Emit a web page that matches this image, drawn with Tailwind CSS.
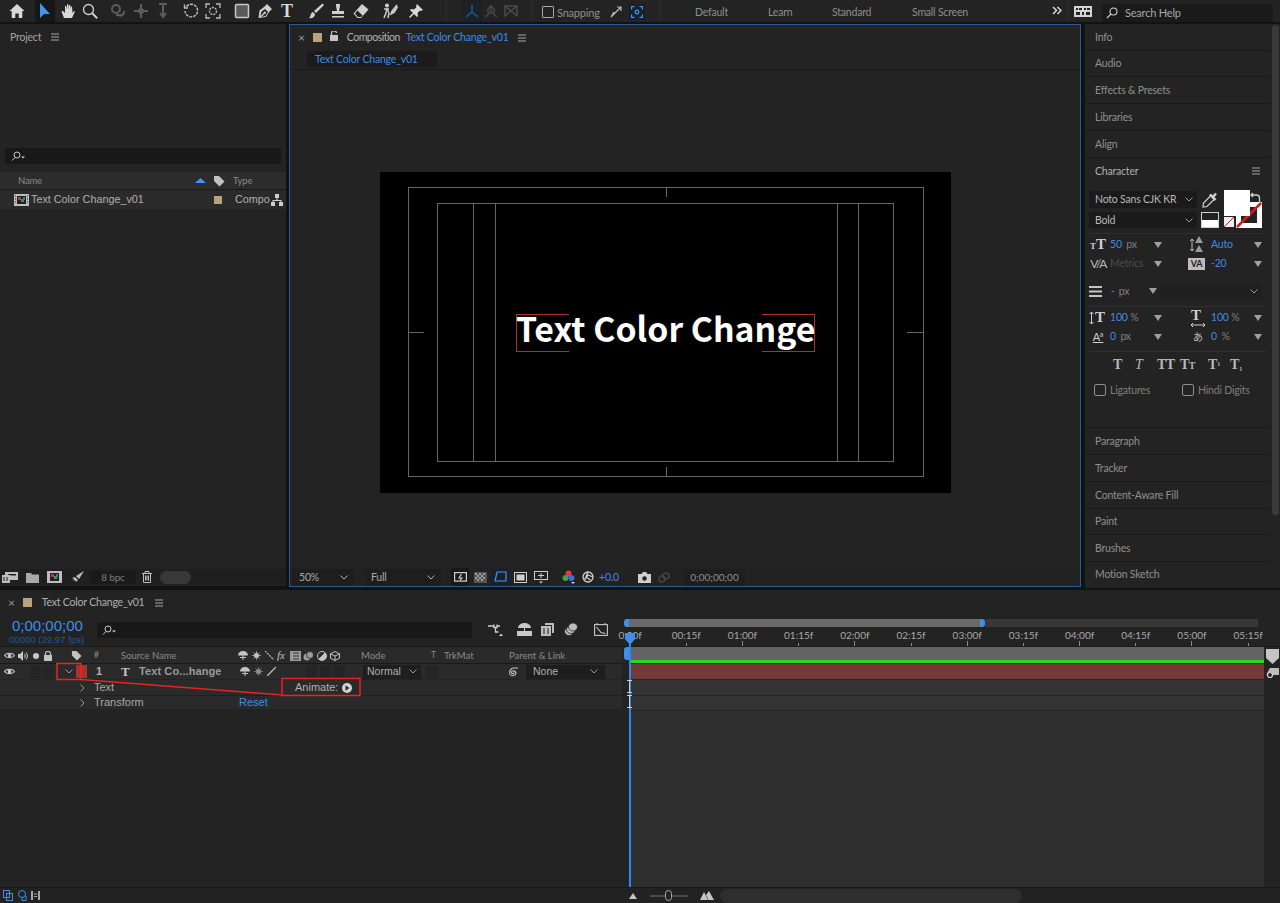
<!DOCTYPE html>
<html>
<head>
<meta charset="utf-8">
<title>Text Color Change_v01</title>
<script src="https://cdn.jsdelivr.net/npm/@tailwindcss/browser@4"></script>
</head>
<body class="relative w-[1280px] h-[903px] overflow-hidden bg-[#121212] text-[10.500px] tracking-[-0.2px] leading-none text-[#a3a3a3] font-[Lato,sans-serif]">

<!-- toolbar -->
<header class="flex items-center h-[22px] bg-[#232323] pl-[9px]">
  <svg class="w-4 h-4" viewBox="0 0 16 16" fill="#d8d8d8"><path d="M8 1 0.5 8h2.200v7h3.600v-4.500h3.400V15h3.600V8h2.200z"/></svg>
  <div class="flex items-center justify-center w-[20px] h-[22px] ml-[10px] bg-[#171717]"><svg class="w-4 h-4" viewBox="0 0 16 16" fill="#3f95f2"><path d="M3 0v15l4-4 6 0z"/></svg></div>
  <svg class="w-4 h-4 ml-[5px]" viewBox="0 0 16 16" fill="#d8d8d8"><path d="M4 15 1.500 8.500l1.200-.8L5 10V3l1.200-.3.8 4.300V1.500L8.300 1.300 9 6.500V2l1.300.2.500 4.600V3.500l1.300.3.400 6.200 1.500-2 1 .5L12 15z"/></svg>
  <svg class="w-4 h-4 ml-[6px]" viewBox="0 0 16 16" fill="none" stroke="#cfcfcf" stroke-width="1.300"><circle cx="6.500" cy="6.500" r="5"/><path d="m10.200 10.200 5 5" stroke-width="2"/></svg>
  <svg class="w-4 h-4 ml-[12px]" viewBox="0 0 16 16" fill="none" stroke="#5c5c5c" stroke-width="2"><circle cx="6" cy="6" r="4"/><path d="M8 12a4 4 0 0 0 6-4"/><path d="M6 12h6"/></svg>
  <svg class="w-4 h-4 ml-[7px]" viewBox="0 0 16 16" fill="none" stroke="#5c5c5c" stroke-width="2"><path d="M8 1v14M1 8h14"/><circle cx="8" cy="8" r="2" fill="#5c5c5c"/></svg>
  <svg class="w-4 h-4 ml-[6px]" viewBox="0 0 16 16" fill="none" stroke="#5c5c5c" stroke-width="2"><path d="M8 1v12M5 10l3 4 3-4M4 1h8"/></svg>
  <svg class="w-4 h-4 ml-[12px]" viewBox="0 0 16 16" fill="none" stroke="#bdbdbd" stroke-width="1.400"><path d="M3.500 3.500A6.300 6.300 0 1 1 2 8" stroke-dasharray="3 1"/><path d="M1.500 1.500v3.500H5"/></svg>
  <svg class="w-4 h-4 ml-[6px]" viewBox="0 0 16 16" fill="none" stroke="#bdbdbd" stroke-width="1.300"><path d="M1 5V1h4M11 1h4v4M15 11v4h-4M5 15H1v-4"/><circle cx="8" cy="8" r="3.500" stroke-dasharray="2 1"/></svg>
  <svg class="w-4 h-4 ml-[13px]" viewBox="0 0 16 16" fill="#5a5a5a" stroke="#c9c9c9" stroke-width="1.500"><rect x="1.500" y="1.500" width="13" height="13" rx="1"/></svg>
  <svg class="w-4 h-4 ml-[7px]" viewBox="0 0 16 16" fill="#d0d0d0"><path d="M10 1 15 6 12 9 9 14 1.500 15 2.500 7.500 7 4zM4.500 8.500l-1 4.500 3-3a1.200 1.200 0 1 1 1 1l-3 3 4-1 2.500-4-3-3z"/></svg>
  <span class="w-4 ml-[6px] text-center text-[18px] font-bold text-[#d8d8d8] font-['Liberation_Serif',serif]">T</span>
  <svg class="w-4 h-4 ml-[13px]" viewBox="0 0 16 16" fill="#d0d0d0"><path d="M14.500 0.500 16 2 8 10 6 8zM5 9l2 2c0 3-3 5-6 4 2-1 1-5 4-6z"/></svg>
  <svg class="w-4 h-4 ml-[6px]" viewBox="0 0 16 16" fill="#d0d0d0"><path d="M6 1h4v2L9 8h5v3H2V8h5L6 3zM2 13h12v1.500H2z"/></svg>
  <svg class="w-4 h-4 ml-[7px]" viewBox="0 0 16 16" fill="#d0d0d0"><path d="M9 1 15.500 6.500 8 15H4.500L0.500 10.500z"/><path d="M4.500 7.500 9.500 12.500 8 14H5L2 10.500z" fill="#232323"/></svg>
  <svg class="w-4 h-4 ml-[13px]" viewBox="0 0 16 16" fill="none" stroke="#c9c9c9" stroke-width="1.500"><circle cx="5" cy="2.500" r="1.300" fill="#c9c9c9"/><path d="M5 5 4 10l-2 5M5 6l2 4-1 5M2 6h5"/><path d="m15 2-5 6-1 3 3-1.500L15.500 4" fill="#c9c9c9"/></svg>
  <svg class="w-4 h-4 ml-[10px]" viewBox="0 0 16 16" fill="#d8d8d8"><path d="m9 1 6 6-2 1-1-.5L9.500 10l.5 3-1 1-3-3-4 4-1-1 4-4-3-3 1-1 3 .5L8.500 4 8 3z"/></svg>
  <div class="w-[1px] h-[22px] ml-[22px] bg-[#2e2e2e]"></div>
  <div class="flex items-center justify-center w-[20px] h-[22px] ml-[15px] bg-[#1c2126]"><svg class="w-4 h-4" viewBox="0 0 16 16" fill="none" stroke="#1e4a7a" stroke-width="2"><path d="M8 2v7l-6 5M8 9l6 5"/></svg></div>
  <svg class="w-4 h-4 ml-[1px]" viewBox="0 0 16 16" fill="none" stroke="#4a4a4a" stroke-width="1.500"><path d="M8 2v7l-6 5M8 9l6 5"/><path d="M5 10V6l3-3 3 3v4"/></svg>
  <svg class="w-4 h-4 ml-[4px]" viewBox="0 0 16 16" fill="none" stroke="#4a4a4a" stroke-width="1.500"><path d="M2 3v10l12-10v10zM2 3h12"/></svg>
  <div class="w-[1px] h-[22px] ml-[12px] bg-[#2e2e2e]"></div>
  <div class="w-[12px] h-[12px] ml-[10px] mt-[2px] border-[1.500px] border-[#a8a8a8] rounded-[1px]"></div>
  <span class="ml-[3px] mt-[3px] w-[44px] text-[11px] text-[#8e8e8e]">Snapping</span>
  <svg class="w-3 h-3 ml-[9px] mt-[2px]" viewBox="0 0 12 12" fill="none" stroke="#bdbdbd" stroke-width="1.200"><path d="M1 11 6 6l5-5M7 1h4v4M1 11l3-5"/></svg>
  <div class="flex items-center justify-center w-[16px] h-[16px] ml-[7px] mt-[2px] bg-[#17212d]"><svg class="w-3 h-3" viewBox="0 0 12 12" fill="none" stroke="#3f95f2" stroke-width="1.300"><path d="M0.500 3.500v-3h3M8.500 .5h3v3M11.500 8.500v3h-3M3.500 11.500h-3v-3"/><circle cx="6" cy="6" r="1.800"/></svg></div>
  <div class="w-[1px] h-[22px] ml-[15px] bg-[#2e2e2e]"></div>
  <span class="ml-[34px] mt-[3px] w-[73px] text-[#8e8e8e]">Default</span>
  <span class="mt-[3px] w-[64px] text-[#8e8e8e]">Learn</span>
  <span class="mt-[3px] w-[80px] text-[#8e8e8e]">Standard</span>
  <span class="mt-[3px] w-[140px] text-[#8e8e8e]">Small Screen</span>
  <svg class="w-[10px] h-[10px]" viewBox="0 0 10 10" fill="none" stroke="#d8d8d8" stroke-width="1.500"><path d="m1 1 3.500 3.500L1 8M5.500 1 9 4.500 5.500 8"/></svg>
  <div class="w-[1px] h-[22px] ml-[5px] bg-[#2e2e2e]"></div>
  <div class="flex items-center justify-center w-[18px] h-[11px] ml-[6px] bg-[#d5d5d5]"><svg class="w-[14px] h-[7px]" viewBox="0 0 14 7" fill="#222"><rect x="0" y="0" width="2" height="2"/><rect x="3" y="0" width="3" height="2"/><rect x="8" y="0" width="2" height="2"/><rect x="11" y="0" width="3" height="2"/><rect x="0" y="4" width="4" height="3"/><rect x="6" y="4" width="2" height="3"/><rect x="10" y="4" width="4" height="3"/></svg></div>
  <div class="flex items-center w-[171px] h-[18px] ml-[10px] mt-[3px] bg-[#1a1a1a] rounded-[2px]">
    <svg class="w-3 h-3 ml-[4px]" viewBox="0 0 12 12" fill="none" stroke="#cfcfcf" stroke-width="1.100"><circle cx="7.500" cy="4.500" r="3.500"/><path d="M5 7 1 11"/></svg>
    <span class="ml-[7px] text-[11px] text-[#a8a8a8]">Search Help</span>
  </div>
</header>

<main class="flex h-[564px] mt-[2px]">
  <!-- project panel -->
  <section class="flex flex-col w-[286px] h-[562px] bg-[#232323]">
    <div class="flex items-center h-[26px] pl-[10px]">
      <span class="text-[#a3a3a3]">Project</span>
      <svg class="w-[8px] h-[8px] ml-[10px]" viewBox="0 0 8 8" stroke="#a8a8a8"><path d="M0 1h8M0 4h8M0 7h8"/></svg>
    </div>
    <div class="h-[98px]"></div>
    <div class="flex items-center h-[16px] mx-[5px] bg-[#181818] rounded-[2px] pl-[6px]">
      <svg class="w-[14px] h-[10px]" viewBox="0 0 14 10" fill="none" stroke="#c9c9c9"><circle cx="6" cy="4" r="3"/><path d="M4 6.500 1 9.500"/><path d="M10 5.500h4l-2 2z" fill="#c9c9c9" stroke="none"/></svg>
    </div>
    <div class="flex items-center h-[18px] mt-[8px] bg-[#2c2c2c] text-[9.500px] text-[#8a8a8a] border-b border-[#181818]">
      <span class="ml-[18px] w-[177px]">Name</span>
      <svg class="w-[11px] h-[5px]" viewBox="0 0 11 5" fill="#3f95f2"><path d="M5.500 0 11 5H0z"/></svg>
      <svg class="w-[12px] h-[12px] ml-[7px]" viewBox="0 0 12 12" fill="#c2c2c2"><path d="M1 1h5l5.500 5.500-5 5L1 6z"/></svg>
      <span class="ml-[8px]">Type</span>
    </div>
    <div class="flex items-center h-[19px] bg-[#2a2a2a] font-['Liberation_Sans',sans-serif] tracking-normal text-[10.800px] text-[#b0b0b0]">
      <svg class="w-[15px] h-[12px] ml-[14px]" viewBox="0 0 15 12"><rect width="15" height="12" fill="#bdbdbd"/><rect x="3" y="2" width="9" height="8" fill="#222"/><rect x="4" y="3" width="3" height="3" fill="#c03a3a"/><rect x="7" y="5" width="3" height="3" fill="#3a9a46"/><rect x="9" y="3" width="2" height="3" fill="#3a6fd0"/><path d="M1 2h1M1 5h1M1 8h1M13 2h1M13 5h1M13 8h1" stroke="#222"/></svg>
      <span class="ml-[2px] w-[183px]">Text Color Change_v01</span>
      <div class="w-[8px] h-[8px] bg-[#b9a37e]"></div>
      <span class="ml-[13px] w-[36px] overflow-hidden">Compo</span>
      <svg class="w-[12px] h-[12px]" viewBox="0 0 12 12" fill="#cfcfcf"><rect x="4" y="0" width="4" height="4"/><rect x="0" y="8" width="4" height="4"/><rect x="8" y="8" width="4" height="4"/><path d="M5.500 4h1v2H10.500v2h-1V7h-7v1h-1V6h4z"/></svg>
    </div>
    <div class="flex-1"></div>
    <div class="flex items-center h-[16px] mb-[1px] pl-[2px] bg-[#1f1f1f]">
      <svg class="w-[16px] h-[11px]" viewBox="0 0 16 11" fill="#bdbdbd"><rect x="3" y="0" width="13" height="8"/><rect x="6" y="2" width="8" height="1.500" fill="#222"/><rect x="0" y="3" width="8" height="8"/><path d="M2 5v4M5 5v4" stroke="#222"/></svg>
      <svg class="w-[13px] h-[11px] ml-[8px]" viewBox="0 0 13 11" fill="#a8a8a8"><path d="M0 1h5l1 1.500h7V11H0z"/></svg>
      <svg class="w-[15px] h-[12px] ml-[8px]" viewBox="0 0 15 12"><rect width="15" height="12" fill="#bdbdbd"/><rect x="3" y="2" width="9" height="8" fill="#222"/><rect x="4" y="3" width="3" height="3" fill="#c03a3a"/><rect x="7" y="5" width="3" height="3" fill="#3a9a46"/><rect x="9" y="3" width="2" height="3" fill="#3a6fd0"/></svg>
      <svg class="w-[13px] h-[12px] ml-[9px]" viewBox="0 0 13 12" fill="#bdbdbd"><path d="M13 0 8 8 5 5zM4 6l3 3-2 2-1-2-2 1 1-2-2-1z"/></svg>
      <div class="flex items-center justify-center w-[46px] h-[13px] ml-[6px] bg-[#1a1a1a] text-[10px] text-[#7c7c7c]">8 bpc</div>
      <svg class="w-[10px] h-[12px] ml-[6px]" viewBox="0 0 10 12" fill="none" stroke="#bdbdbd"><path d="M0 2.500h10M3 2.500V.5h4v2M1.500 2.500v9h7v-9M3.500 4.500v5M5 4.500v5M6.500 4.500v5"/></svg>
      <div class="w-[31px] h-[13px] ml-[8px] rounded-full bg-[#383838]"></div>
    </div>
  </section>

  <!-- composition panel -->
  <section class="flex flex-col w-[792px] h-[563px] ml-[3px] bg-[#232323] border border-[#2a5a93]">
    <div class="flex items-center h-[25px] pl-[8px] text-[#b0b0b0]">
      <span class="text-[12px] text-[#9a9a9a]">×</span>
      <div class="w-[9px] h-[9px] ml-[8px] bg-[#b9a37e]"></div>
      <svg class="w-[8px] h-[10px] ml-[8px] mb-[3px]" viewBox="0 0 8 10" fill="#c4c4c4"><path d="M0 4h8v6H0z"/><path d="M1.500 4V2a2.500 2 0 0 1 5 0" fill="none" stroke="#c4c4c4" stroke-width="1.200"/></svg>
      <span class="ml-[9px] tracking-[-0.5px]">Composition</span>
      <span class="ml-[6px] text-[#3f8ae0]">Text Color Change_v01</span>
      <svg class="w-[8px] h-[8px] ml-[9px]" viewBox="0 0 8 8" stroke="#a8a8a8"><path d="M0 1h8M0 4h8M0 7h8"/></svg>
    </div>
    <div class="flex items-center w-[130px] h-[16px] mt-[1px] ml-[17px] pl-[8px] bg-[#1b1b1b] text-[#3f8ae0]">Text Color Change_v01</div>
    <div class="h-[3px] border-b border-[#191919]"></div>
    <div class="flex-1 flex items-start pl-[90px] pt-[102px]">
      <div class="relative w-[571px] h-[321px] bg-black overflow-hidden">
        <div class="absolute left-[28px] top-[15px] w-[516px] h-[290px] border border-[#666]"></div>
        <div class="absolute left-[57px] top-[31px] w-[457px] h-[259px] border border-[#666]"></div>
        <div class="absolute left-[93px] top-[31px] w-[1px] h-[259px] bg-[#666]"></div>
        <div class="absolute left-[115px] top-[31px] w-[1px] h-[259px] bg-[#666]"></div>
        <div class="absolute left-[457px] top-[31px] w-[1px] h-[259px] bg-[#666]"></div>
        <div class="absolute left-[478px] top-[31px] w-[1px] h-[259px] bg-[#666]"></div>
        <div class="absolute left-[286px] top-[15px] w-[1px] h-[10px] bg-[#666]"></div>
        <div class="absolute left-[286px] top-[295px] w-[1px] h-[10px] bg-[#666]"></div>
        <div class="absolute left-[28px] top-[160px] w-[16px] h-[1px] bg-[#666]"></div>
        <div class="absolute left-[527px] top-[160px] w-[16px] h-[1px] bg-[#666]"></div>
        <div class="absolute left-[136px] top-[142px] w-[53px] h-[38px] border-l border-y border-[#a83232]"></div>
        <div class="absolute left-[382px] top-[142px] w-[53px] h-[38px] border-r border-y border-[#a83232]"></div>
        <div class="absolute left-[136px] top-[134px] w-[299px] text-center whitespace-nowrap tracking-normal text-[33.800px] leading-[44px] font-bold text-white font-['Noto_Sans_CJK_KR',sans-serif]">Text Color Change</div>
      </div>
    </div>
    <div class="flex items-center h-[18px] pl-[3px] text-[#a8a8a8] bg-[#222222]">
      <div class="flex items-center justify-between w-[61px] h-[17px] px-[6px] bg-[#1e1e1e]"><span>50%</span><svg class="w-[8px] h-[5px]" viewBox="0 0 8 5" fill="none" stroke="#b5b5b5"><path d="m0.500 0.500 3.500 3.500 3.500-3.500"/></svg></div>
      <div class="flex items-center justify-between w-[76px] h-[17px] ml-[11px] px-[6px] bg-[#1e1e1e]"><span>Full</span><svg class="w-[8px] h-[5px]" viewBox="0 0 8 5" fill="none" stroke="#b5b5b5"><path d="m0.500 0.500 3.500 3.500 3.500-3.500"/></svg></div>
      <div class="flex items-center justify-center w-[18px] h-[18px] ml-[10px] bg-[#1a1a1a]"><svg class="w-[13px] h-[11px]" viewBox="0 0 13 11" fill="none" stroke="#cfcfcf" stroke-width="1.200"><rect x=".6" y=".6" width="11.800" height="8.500"/><path d="M7.500 2 5 6h3L6 8.500"/></svg></div>
      <svg class="w-[13px] h-[11px] ml-[5px]" viewBox="0 0 13 11" fill="#9a9a9a"><rect width="13" height="11" fill="#555"/><path d="M1 1h2v2H1zM5 1h2v2H5zM9 1h2v2H9zM3 3h2v2H3zM7 3h2v2H7zM1 5h2v2H1zM5 5h2v2H5zM9 5h2v2H9zM3 7h2v2H3zM7 7h2v2H7z"/></svg>
      <div class="flex items-center justify-center w-[18px] h-[18px] ml-[4px] bg-[#1a2029]"><svg class="w-[13px] h-[12px]" viewBox="0 0 13 12" fill="none" stroke="#3f95f2" stroke-width="1.200"><path d="M3 1h9v9H1z"/></svg></div>
      <svg class="w-[13px] h-[11px] ml-[5px]" viewBox="0 0 13 11" fill="none" stroke="#cfcfcf"><rect x=".5" y=".5" width="12" height="10"/><rect x="3" y="3" width="7" height="5" fill="#cfcfcf"/></svg>
      <svg class="w-[14px] h-[13px] ml-[7px]" viewBox="0 0 14 13" fill="none" stroke="#cfcfcf"><rect x=".5" y=".5" width="13" height="8"/><path d="M7 2v5M4 4.500h6"/><path d="M5 10.500h4l-2 2z" fill="#cfcfcf" stroke="none"/></svg>
      <svg class="w-[13px] h-[14px] ml-[14px]" viewBox="0 0 13 14"><circle cx="6.500" cy="3.500" r="3" fill="#e03a3a"/><circle cx="3.500" cy="8" r="3" fill="#3aa648"/><circle cx="9.500" cy="8" r="3" fill="#3a6fe0"/><path d="M9 12h4l-2 2z" fill="#cfcfcf"/></svg>
      <svg class="w-[12px] h-[12px] ml-[7px]" viewBox="0 0 12 12" fill="none" stroke="#cfcfcf" stroke-width="1.300"><circle cx="6" cy="6" r="5"/><path d="M6 1 4 6l4.500 3M11 6 6 4 2.500 8.500"/></svg>
      <span class="ml-[5px] w-[19px] text-[#3f8ae0]">+0.0</span>
      <svg class="w-[13px] h-[11px] ml-[20px]" viewBox="0 0 13 11" fill="#cfcfcf"><path d="M0 2h3.500L5 0h3l1.500 2H13v9H0z"/><circle cx="6.500" cy="6.500" r="2.200" fill="#232323"/></svg>
      <svg class="w-[13px] h-[11px] ml-[6px]" viewBox="0 0 13 11" fill="none" stroke="#454545" stroke-width="1.500"><circle cx="5" cy="7" r="3"/><circle cx="9" cy="4" r="3"/></svg>
      <div class="flex items-center justify-center w-[61px] h-[17px] ml-[14px] bg-[#1e1e1e] text-[10px] text-[#8e8e8e] tracking-normal">0;00;00;00</div>
    </div>
  </section>

  <!-- right panels -->
  <aside class="relative flex w-[195px] ml-[4px] h-[564px] bg-[#232323]">
    <div class="flex flex-col w-[186px] pt-[1px] text-[#8f8f8f]">
      <div class="flex items-center h-[26px] pl-[10px] bg-[#232323] border-b border-[#191919]">Info</div>
      <div class="flex items-center h-[26px] pl-[10px] bg-[#232323] border-b border-[#191919]">Audio</div>
      <div class="flex items-center h-[27px] pl-[10px] bg-[#232323] border-b border-[#191919]">Effects &amp; Presets</div>
      <div class="flex items-center h-[27px] pl-[10px] bg-[#232323] border-b border-[#191919]">Libraries</div>
      <div class="flex items-center h-[27px] pl-[10px] bg-[#232323] border-b border-[#191919]">Align</div>

      <!-- character -->
      <div class="flex flex-col h-[270px] bg-[#232323] border-b border-[#191919]">
        <div class="flex items-center justify-between h-[26px] pl-[10px] pr-[11px] text-[#b0b0b0]"><span>Character</span><svg class="w-[8px] h-[8px]" viewBox="0 0 8 8" stroke="#a8a8a8"><path d="M0 1h8M0 4h8M0 7h8"/></svg></div>
        <div class="relative flex flex-col h-[42px] mt-[7px]">
          <div class="flex items-center w-[108px] h-[17px] ml-[4px] bg-[#1a1a1a] text-[#b8b8b8]"><span class="w-[93px] pl-[6px] whitespace-nowrap">Noto Sans CJK KR</span><svg class="w-[8px] h-[5px] ml-[3px]" viewBox="0 0 8 5" fill="none" stroke="#9a9a9a"><path d="m0.500 0.500 3.500 3.500 3.500-3.500"/></svg></div>
          <div class="flex items-center w-[108px] h-[16px] ml-[4px] mt-[4px] bg-[#1a1a1a] text-[#b8b8b8]"><span class="w-[93px] pl-[6px]">Bold</span><svg class="w-[8px] h-[5px] ml-[3px]" viewBox="0 0 8 5" fill="none" stroke="#9a9a9a"><path d="m0.500 0.500 3.500 3.500 3.500-3.500"/></svg></div>
          <svg class="absolute left-[117px] top-[1px] w-[16px] h-[16px]" viewBox="0 0 16 16" fill="none" stroke="#cfcfcf" stroke-width="1.200"><path d="M9 3.500 1.500 11 1 15l4-.5L12.500 7"/><path d="m8 2.500 5.500 5.500M11 5l3-3.500" stroke-width="2.500"/></svg>
          <div class="absolute left-[116px] top-[21px] w-[18px] h-[16px] border border-[#d0d0d0] bg-[linear-gradient(#222_50%,#fff_50%)]"></div>
          <svg class="absolute left-[139px] top-[-1px] w-[38px] h-[38px]" viewBox="0 0 38 38"><rect x="12" y="12" width="26" height="26" fill="#fff"/><rect x="17" y="17" width="16" height="16" fill="#232323"/><path d="M13 37 37 13" stroke="#d41c1c" stroke-width="2.500"/><rect x="0" y="0" width="26" height="26" fill="#fff"/><rect x="0" y="27" width="10" height="10" fill="#eee"/><path d="M0 37 10 27" stroke="#d41c1c"/></svg>
          <svg class="absolute left-[165px] top-[1px] w-[11px] h-[10px]" viewBox="0 0 11 10" fill="none" stroke="#d0d0d0" stroke-width="1.300"><path d="M3 1 1 3l2 2M1 3h5.500a3 3 0 0 1 3 3v4"/></svg>
        </div>
        <div class="h-[1px] mx-[4px] bg-[#2e2e2e]"></div>

        <div class="grid grid-cols-[21px_43px_35px_23px_43px_1fr] items-center h-[19px] mt-[1px] pl-[4px] pr-[13px] text-[#3f8ae0]">
          <span class="pr-[3px] tracking-normal text-center font-bold text-[#cfcfcf] font-['Liberation_Serif',serif]"><span class="text-[9px]">T</span><span class="text-[15px]">T</span></span>
          <span>50 <span class="ml-[2px] text-[#7e7e7e]">px</span></span>
          <svg class="w-[8px] h-[6px] ml-[1px]" viewBox="0 0 8 6" fill="#a0a0a0"><path d="M0 0h8L4 6z"/></svg>
          <svg class="w-[14px] h-[17px] ml-[2px]" viewBox="0 0 14 17" fill="#9a9a9a"><path d="M9 0 5 7h8zM9 9 5 16h8z"/><path d="M2 3v12M0 5l2-2 2 2M0 13l2 2 2-2" fill="none" stroke="#bdbdbd"/></svg>
          <span>Auto</span>
          <svg class="w-[8px] h-[6px] justify-self-end" viewBox="0 0 8 6" fill="#a0a0a0"><path d="M0 0h8L4 6z"/></svg>
        </div>
        <div class="grid grid-cols-[21px_43px_35px_23px_43px_1fr] items-center h-[19px] pl-[4px] pr-[13px] text-[#3f8ae0]">
          <span class="pr-[3px] text-[12px] tracking-[-1.500px] text-center text-[#bdbdbd]">V/A</span>
          <span class="text-[#4c4c4c]">Metrics</span>
          <svg class="w-[8px] h-[6px] ml-[1px]" viewBox="0 0 8 6" fill="#a0a0a0"><path d="M0 0h8L4 6z"/></svg>
          <div class="flex items-center justify-center w-[17px] h-[12px] bg-[#bdbdbd] text-[9px] font-bold text-[#232323]">VA</div>
          <span>-20</span>
          <svg class="w-[8px] h-[6px] justify-self-end" viewBox="0 0 8 6" fill="#a0a0a0"><path d="M0 0h8L4 6z"/></svg>
        </div>
        <div class="flex items-center h-[33px] pt-[3px] ml-[4px] mr-[9px] text-[#7e7e7e]">
          <svg class="w-[13px] h-[11px]" viewBox="0 0 13 11" fill="#c4c4c4"><path d="M0 0h13v2H0zM0 4.500h13v2H0zM0 9h13v2H0z"/></svg>
          <span class="ml-[9px] text-[#3f8ae0]">-</span><span class="ml-[4px]">px</span>
          <svg class="w-[8px] h-[6px] ml-[20px]" viewBox="0 0 8 6" fill="#a0a0a0"><path d="M0 0h8L4 6z"/></svg>
          <div class="flex items-center justify-end flex-1 h-[16px] ml-[4px] pr-[4px] bg-[#1f1f1f]"><svg class="w-[8px] h-[5px]" viewBox="0 0 8 5" fill="none" stroke="#9a9a9a"><path d="m0.500 0.500 3.500 3.500 3.500-3.500"/></svg></div>
        </div>
        <div class="h-[1px] mx-[4px] bg-[#2e2e2e]"></div>

        <div class="grid grid-cols-[21px_43px_35px_23px_43px_1fr] items-center h-[19px] mt-[1px] pl-[4px] pr-[13px] text-[#3f8ae0]">
          <span class="flex items-center pr-[3px] text-[15px] font-bold text-[#cfcfcf] font-['Liberation_Serif',serif]"><svg class="w-[5px] h-[14px] mr-[1px]" viewBox="0 0 5 14" fill="none" stroke="#cfcfcf"><path d="M2.500 1v12M.5 3l2-2 2 2M.5 11l2 2 2-2"/></svg>T</span>
          <span>100 <span class="text-[#7e7e7e]">%</span></span>
          <svg class="w-[8px] h-[6px] ml-[1px]" viewBox="0 0 8 6" fill="#a0a0a0"><path d="M0 0h8L4 6z"/></svg>
          <span class="flex flex-col items-start pl-[3px] text-[15px] font-bold text-[#cfcfcf] font-['Liberation_Serif',serif]">T<svg class="w-[14px] h-[4px]" viewBox="0 0 14 4" fill="none" stroke="#cfcfcf"><path d="M0 2h14M2 0 0 2l2 2M12 0l2 2-2 2"/></svg></span>
          <span class="mr-[2px]">100 <span class="text-[#7e7e7e]">%</span></span>
          <svg class="w-[8px] h-[6px] justify-self-end" viewBox="0 0 8 6" fill="#a0a0a0"><path d="M0 0h8L4 6z"/></svg>
        </div>
        <div class="grid grid-cols-[21px_43px_35px_23px_43px_1fr] items-center h-[19px] pl-[4px] pr-[13px] text-[#3f8ae0]">
          <span class="pr-[3px] text-[11px] text-center underline text-[#cfcfcf]">Aª</span>
          <span>0 <span class="ml-[2px] text-[#7e7e7e]">px</span></span>
          <svg class="w-[8px] h-[6px] ml-[1px]" viewBox="0 0 8 6" fill="#a0a0a0"><path d="M0 0h8L4 6z"/></svg>
          <span class="pl-[5px] text-[10px] text-[#bdbdbd] font-['Noto_Sans_CJK_JP',sans-serif]">あ</span>
          <span>0 <span class="ml-[2px] text-[#7e7e7e]">%</span></span>
          <svg class="w-[8px] h-[6px] justify-self-end" viewBox="0 0 8 6" fill="#a0a0a0"><path d="M0 0h8L4 6z"/></svg>
        </div>
        <div class="h-[1px] mx-[4px] mt-[5px] bg-[#2e2e2e]"></div>

        <div class="flex items-center h-[26px] pl-[28px] text-[14px] font-bold tracking-normal text-[#b8b8b8] font-['Liberation_Serif',serif]">
          <span class="w-[22px]">T</span>
          <span class="w-[22px] italic font-normal">T</span>
          <span class="w-[23px] tracking-[-0.5px]">TT</span>
          <span class="w-[28px] tracking-[-0.5px]">T<span class="text-[10px]">T</span></span>
          <span class="w-[22px]">T<sup class="text-[6px]">1</sup></span>
          <span>T<sub class="text-[6px]">1</sub></span>
        </div>
        <div class="flex items-center h-[18px] mt-[3px] pl-[9px] text-[#7e7e7e]">
          <div class="w-[12px] h-[12px] border-[1.500px] border-[#8e8e8e] rounded-[2px]"></div><span class="ml-[4px] w-[72px]">Ligatures</span>
          <div class="w-[12px] h-[12px] border-[1.500px] border-[#8e8e8e] rounded-[2px]"></div><span class="ml-[4px]">Hindi Digits</span>
        </div>
      </div>

      <div class="flex items-center h-[27px] pl-[10px] bg-[#232323] border-b border-[#191919]">Paragraph</div>
      <div class="flex items-center h-[27px] pl-[10px] bg-[#232323] border-b border-[#191919]">Tracker</div>
      <div class="flex items-center h-[27px] pl-[10px] bg-[#232323] border-b border-[#191919]">Content-Aware Fill</div>
      <div class="flex items-center h-[26px] pl-[10px] bg-[#232323] border-b border-[#191919]">Paint</div>
      <div class="flex items-center h-[27px] pl-[10px] bg-[#232323] border-b border-[#191919]">Brushes</div>
      <div class="flex items-center h-[24px] pl-[10px] bg-[#232323]">Motion Sketch</div>
    </div>
    <div class="w-[9px] pt-[1px] pl-[1px] pr-[1px]"><div class="h-[490px] w-[7px] rounded-full bg-[#3a3a3a]"></div></div>
  </aside>
</main>

<!-- timeline -->
<section class="relative flex flex-col h-[313px] mt-[2px] bg-[#232323]">
  <div class="flex items-center h-[22px] pt-[3px] pl-[8px] shrink-0">
    <span class="text-[12px] text-[#9a9a9a]">×</span>
    <div class="w-[9px] h-[9px] ml-[8px] bg-[#b9a37e]"></div>
    <span class="ml-[10px] text-[#b0b0b0]">Text Color Change_v01</span>
    <svg class="w-[8px] h-[8px] ml-[10px]" viewBox="0 0 8 8" stroke="#a8a8a8"><path d="M0 1h8M0 4h8M0 7h8"/></svg>
  </div>
  <div class="flex flex-1 min-h-0">
    <!-- layer outline -->
    <div class="flex flex-col w-[622px] font-['Liberation_Sans',sans-serif] tracking-normal">
      <div class="flex h-[34px]">
        <div class="w-[97px] pl-[9px] pt-[5px]">
          <div class="ml-[3px] text-[15px] leading-[17px] text-[#3f8ee8]">0;00;00;00</div>
          <div class="text-[9.600px] leading-[11px] text-[#1f5597]">00000 (29.97 fps)</div>
        </div>
        <div class="flex items-center w-[375px] h-[16px] mt-[10px] pl-[5px] bg-[#181818] rounded-[2px]">
          <svg class="w-[14px] h-[10px]" viewBox="0 0 14 10" fill="none" stroke="#c9c9c9"><circle cx="6" cy="4" r="3"/><path d="M4 6.500 1 9.500"/><path d="M10 5.500h4l-2 2z" fill="#c9c9c9" stroke="none"/></svg>
        </div>
        <svg class="w-[15px] h-[14px] ml-[16px] mt-[11px]" viewBox="0 0 15 14" fill="none" stroke="#d0d0d0" stroke-width="1.300"><path d="M0 3h6M6 1.500v3h3v-3M9 3h3M7.500 4.500V9h3"/><path d="M11 13h4l-2-2.500z" fill="#d0d0d0" stroke="none"/></svg>
        <svg class="w-[15px] h-[13px] ml-[14px] mt-[11px]" viewBox="0 0 15 13" fill="#c9c9c9"><path d="M1 5a6.500 5 0 0 1 13 0zM7 5h1v3H7zM0 8h15v5H0z"/></svg>
        <svg class="w-[13px] h-[13px] ml-[9px] mt-[11px]" viewBox="0 0 13 13" fill="#bdbdbd"><path d="M4 0h9v10h-2V2H4z"/><path d="M0 3h10v10H0z"/><path d="M3 5v6M7 5v6" stroke="#232323"/></svg>
        <svg class="w-[14px] h-[14px] ml-[10px] mt-[10px]" viewBox="0 0 14 14" fill="#bdbdbd" stroke="#232323" stroke-width=".8"><ellipse cx="5" cy="9.500" rx="4.500" ry="4"/><ellipse cx="7" cy="7.500" rx="4.500" ry="4"/><ellipse cx="9" cy="5" rx="4.500" ry="4"/></svg>
        <svg class="w-[14px] h-[13px] ml-[16px] mt-[11px]" viewBox="0 0 14 13" fill="none" stroke="#c9c9c9" stroke-width="1.100"><rect x=".6" y="1.600" width="12.800" height="10.800"/><path d="M3 1V0M11 1V0M2.500 4 7 9.500l4.500 1"/></svg>
      </div>
      <div class="flex items-center h-[18px] pt-[1px] bg-[#2a2a2a] border-y border-[#191919] text-[8.500px] text-[#8a8a8a] font-[Lato,sans-serif]">
        <svg class="w-[11px] h-[7px] ml-[4px]" viewBox="0 0 11 7" fill="none" stroke="#c9c9c9" stroke-width="1.100"><path d="M.5 3.500C2.500 .5 8.500 .5 10.500 3.500 8.500 6.500 2.500 6.500 .5 3.500z"/><circle cx="5.500" cy="3.500" r="1.300" fill="#c9c9c9"/></svg>
        <svg class="w-[10px] h-[10px] ml-[3px]" viewBox="0 0 10 10" fill="#c9c9c9"><path d="M0 3h2l3-3v10L2 7H0z"/><path d="M6.500 3a3 3 0 0 1 0 4M8 1.500a5 5 0 0 1 0 7" fill="none" stroke="#c9c9c9"/></svg>
        <div class="w-[6px] h-[6px] ml-[5px] rounded-full bg-[#c9c9c9]"></div>
        <svg class="w-[8px] h-[10px] ml-[5px]" viewBox="0 0 8 10" fill="#c4c4c4"><path d="M0 4h8v6H0z"/><path d="M1.500 4V2.500a2.500 2 0 0 1 5 0V4" fill="none" stroke="#c4c4c4" stroke-width="1.200"/></svg>
        <svg class="w-[11px] h-[11px] ml-[19px]" viewBox="0 0 12 12" fill="#c2c2c2"><path d="M1 1h5l5.500 5.500-5 5L1 6z"/></svg>
        <span class="ml-[12px] w-[27px]">#</span>
        <span class="w-[117px] text-[9.500px]">Source Name</span>
        <svg class="w-[10px] h-[9px]" viewBox="0 0 10 9" fill="#c4c4c4"><path d="M0 4.500a5 4.500 0 0 1 10 0zM4.500 4.500h1V9h-1zM2 6h6v1H2z"/></svg>
        <svg class="w-[9px] h-[9px] ml-[4px]" viewBox="0 0 9 9" fill="#c4c4c4" stroke="#c4c4c4"><circle cx="4.500" cy="4.500" r="2"/><path d="M4.500 0v9M0 4.500h9M1.500 1.500l6 6M7.500 1.500l-6 6" stroke-width=".7"/></svg>
        <svg class="w-[9px] h-[9px] ml-[4px]" viewBox="0 0 9 9" stroke="#c4c4c4" stroke-width="1.200" stroke-dasharray="2 1"><path d="m0 0 9 9"/></svg>
        <span class="ml-[3px] w-[11px] italic text-[11px] text-[#c4c4c4] font-['Liberation_Serif',serif]">fx</span>
        <svg class="w-[11px] h-[10px] ml-[2px]" viewBox="0 0 11 10" fill="#9c9c9c"><path d="M0 0h11v10H0z"/><path d="M3 2h6M3 5h6M3 8h6" stroke="#333"/></svg>
        <svg class="w-[11px] h-[10px] ml-[2px]" viewBox="0 0 11 10" fill="#9c9c9c"><circle cx="4" cy="6" r="3.500"/><circle cx="7" cy="4" r="3.500" stroke="#2a2a2a" stroke-width=".8"/></svg>
        <div class="w-[10px] h-[10px] ml-[3px] rounded-full border border-[#c4c4c4] bg-[linear-gradient(135deg,#2a2a2a_50%,#c4c4c4_50%)]"></div>
        <svg class="w-[10px] h-[10px] ml-[3px]" viewBox="0 0 10 10" fill="none" stroke="#c4c4c4"><path d="M5 .5 9.500 2.800v4.400L5 9.500.5 7.200V2.800zM.5 2.800 5 5l4.500-2.200M5 5v4.500"/></svg>
        <span class="ml-[21px] w-[70px] text-[9.500px]">Mode</span>
        <span class="w-[13px]">T</span>
        <span class="w-[65px] text-[9.500px]">TrkMat</span>
        <span class="text-[9.500px]">Parent &amp; Link</span>
      </div>
      <div class="flex items-center h-[15px] bg-[#2a2a2a]">
        <svg class="w-[11px] h-[7px] ml-[4px]" viewBox="0 0 11 7" fill="none" stroke="#d4d4d4" stroke-width="1.100"><path d="M.5 3.500C2.500 .5 8.500 .5 10.500 3.500 8.500 6.500 2.500 6.500 .5 3.500z"/><circle cx="5.500" cy="3.500" r="1.300" fill="#d4d4d4"/></svg>
        <div class="w-[11px] h-[13px] ml-[15px] bg-[#242424]"></div>
        <div class="w-[11px] h-[13px] ml-[2px] bg-[#242424]"></div>
        <svg class="w-[8px] h-[5px] ml-[11px]" viewBox="0 0 8 5" fill="none" stroke="#9a9a9a"><path d="m0.500 0.500 3.500 3.500 3.500-3.500"/></svg>
        <div class="w-[11px] h-[13px] ml-[3px] bg-[#a83232]"></div>
        <span class="ml-[9px] w-[25px] font-bold text-[11px] text-[#b0b0b0]">1</span>
        <span class="w-[18px] text-[13px] font-bold text-[#c4c4c4] font-['Liberation_Serif',serif]">T</span>
        <span class="w-[101px] font-bold text-[11px] text-[#9a9a9a] tracking-[0.1px] whitespace-nowrap">Text Co...hange</span>
        <svg class="w-[10px] h-[9px]" viewBox="0 0 10 9" fill="#c4c4c4"><path d="M0 4.500a5 4.500 0 0 1 10 0zM4.500 4.500h1V9h-1zM2 6h6v1H2z"/></svg>
        <svg class="w-[9px] h-[9px] ml-[4px]" viewBox="0 0 9 9" fill="#8e8e8e" stroke="#8e8e8e"><circle cx="4.500" cy="4.500" r="2"/><path d="M4.500 0v9M0 4.500h9M1.500 1.500l6 6M7.500 1.500l-6 6" stroke-width=".7"/></svg>
        <svg class="w-[9px] h-[9px] ml-[4px]" viewBox="0 0 9 9" stroke="#d4d4d4" stroke-width="1.200"><path d="M0 9 9 0"/></svg>
        <div class="w-[11px] h-[13px] ml-[30px] bg-[#242424]"></div>
        <div class="w-[11px] h-[13px] ml-[3px] bg-[#242424]"></div>
        <div class="w-[11px] h-[13px] ml-[3px] bg-[#242424]"></div>
        <div class="flex items-center justify-between w-[58px] h-[14px] ml-[18px] px-[4px] bg-[#1e1e1e] text-[10.500px] text-[#b0b0b0]"><span>Normal</span><svg class="w-[8px] h-[5px]" viewBox="0 0 8 5" fill="none" stroke="#9a9a9a"><path d="m0.500 0.500 3.500 3.500 3.500-3.500"/></svg></div>
        <div class="w-[12px] h-[12px] ml-[5px] bg-[#242424]"></div>
        <svg class="w-[11px] h-[10px] ml-[70px]" viewBox="0 0 11 10" fill="none" stroke="#c4c4c4" stroke-width="1.100"><path d="M6 5.500a1.300 1.300 0 1 1-1.500-1.500 3 3 0 0 1 3.500 2 3.500 3.500 0 0 1-6 1.500A4.500 4.500 0 0 1 6 1h4"/></svg>
        <div class="flex items-center justify-between w-[79px] h-[14px] ml-[7px] px-[7px] bg-[#1e1e1e] text-[10.500px] text-[#b0b0b0]"><span>None</span><svg class="w-[8px] h-[5px]" viewBox="0 0 8 5" fill="none" stroke="#9a9a9a"><path d="m0.500 0.500 3.500 3.500 3.500-3.500"/></svg></div>
      </div>
      <div class="flex items-center h-[15px] mt-[1px] pl-[80px] bg-[#2a2a2a] text-[11px] text-[#a8a8a8]">
        <svg class="w-[5px] h-[8px]" viewBox="0 0 5 8" fill="none" stroke="#9a9a9a"><path d="m.5 .5 3.500 3.500L.5 7.500"/></svg>
        <span class="ml-[9px] w-[201px]">Text</span>
        <span class="text-[#b0b0b0]">Animate:</span>
        <svg class="w-[10px] h-[10px] ml-[4px]" viewBox="0 0 10 10"><circle cx="5" cy="5" r="5" fill="#d4d4d4"/><path d="M3.500 2.200 7.500 5l-4 2.800z" fill="#2a2a2a"/></svg>
      </div>
      <div class="flex items-center h-[14px] bg-[#2a2a2a] border-t border-[#1f1f1f] text-[11px] pl-[80px] text-[#a8a8a8]">
        <svg class="w-[5px] h-[8px]" viewBox="0 0 5 8" fill="none" stroke="#9a9a9a"><path d="m.5 .5 3.500 3.500L.5 7.500"/></svg>
        <span class="ml-[9px] w-[145px]">Transform</span>
        <span class="text-[#3f8ee8]">Reset</span>
      </div>
    </div>

    <!-- time graph -->
    <div class="relative flex-1 flex flex-col min-w-0 tracking-normal font-[Lato,sans-serif]">
      <div class="flex items-center h-[8px] mt-[7px] pr-[22px]">
        <div class="w-[5px] h-[8px] ml-[2px] rounded-l-[3px] bg-[#3f8ee8]"></div>
        <div class="w-[351px] h-[8px] bg-[#6a6a6a]"></div>
        <div class="w-[5px] h-[8px] rounded-r-[3px] bg-[#3f8ee8]"></div>
        <div class="flex-1 h-[8px] bg-[#3a3834]"></div>
      </div>
      <div class="flex h-[19px] ml-[-20px] overflow-hidden pr-[15px] text-[10px] text-[#a8a8a8]">
        <span class="flex flex-col items-center justify-between w-[56.200px] shrink-0 pt-[3px]">0:00f<i class="w-[1px] h-[3px] bg-[#8a8a8a]"></i></span>
        <span class="flex flex-col items-center justify-between w-[56.200px] shrink-0 pt-[3px]">00:15f<i class="w-[1px] h-[3px] bg-[#8a8a8a]"></i></span>
        <span class="flex flex-col items-center justify-between w-[56.200px] shrink-0 pt-[3px]">01:00f<i class="w-[1px] h-[5px] bg-[#8a8a8a]"></i></span>
        <span class="flex flex-col items-center justify-between w-[56.200px] shrink-0 pt-[3px]">01:15f<i class="w-[1px] h-[3px] bg-[#8a8a8a]"></i></span>
        <span class="flex flex-col items-center justify-between w-[56.200px] shrink-0 pt-[3px]">02:00f<i class="w-[1px] h-[5px] bg-[#8a8a8a]"></i></span>
        <span class="flex flex-col items-center justify-between w-[56.200px] shrink-0 pt-[3px]">02:15f<i class="w-[1px] h-[3px] bg-[#8a8a8a]"></i></span>
        <span class="flex flex-col items-center justify-between w-[56.200px] shrink-0 pt-[3px]">03:00f<i class="w-[1px] h-[5px] bg-[#8a8a8a]"></i></span>
        <span class="flex flex-col items-center justify-between w-[56.200px] shrink-0 pt-[3px]">03:15f<i class="w-[1px] h-[3px] bg-[#8a8a8a]"></i></span>
        <span class="flex flex-col items-center justify-between w-[56.200px] shrink-0 pt-[3px]">04:00f<i class="w-[1px] h-[5px] bg-[#8a8a8a]"></i></span>
        <span class="flex flex-col items-center justify-between w-[56.200px] shrink-0 pt-[3px]">04:15f<i class="w-[1px] h-[3px] bg-[#8a8a8a]"></i></span>
        <span class="flex flex-col items-center justify-between w-[56.200px] shrink-0 pt-[3px]">05:00f<i class="w-[1px] h-[5px] bg-[#8a8a8a]"></i></span>
        <span class="flex flex-col items-center justify-between w-[56.200px] shrink-0 pt-[3px]">05:15f<i class="w-[1px] h-[3px] bg-[#8a8a8a]"></i></span>
      </div>
      <div class="flex items-center h-[14px] border-t border-[#191919]">
        <div class="w-[6px] h-[13px] ml-[2px] rounded-l-[3px] bg-[#3f8ee8]"></div>
        <div class="flex-1 h-[13px] mr-[16px] bg-[#636363]"></div>
      </div>
      <div class="h-[3px] ml-[8px] mr-[16px] bg-[#22dd22]"></div>
      <div class="h-[15px] mt-[1px] ml-[8px] mr-[16px] bg-[#733a3a]"></div>
      <div class="h-[15px] mt-[1px] ml-[8px] mr-[16px] bg-[#333333]"></div>
      <div class="h-[14px] mt-[1px] ml-[8px] mr-[16px] bg-[#333333]"></div>
      <div class="flex-1 mt-[1px] ml-[8px] mr-[16px] bg-[#2f2f2f]"></div>

      <!-- playhead -->
      <div class="absolute left-[7px] top-[24px] bottom-0 w-[2px] bg-[#2f86ee]"></div>
      <svg class="absolute left-[3px] top-[21px] w-[10px] h-[12px]" viewBox="0 0 10 12" fill="#3f8ee8"><path d="M0 0h10v6l-5 6-5-6z"/></svg>
      <svg class="absolute left-[5px] top-[68px] w-[5px] h-[13px]" viewBox="0 0 5 13" fill="none" stroke="#cfcfcf"><path d="M0 .5h5M2.500 .5v12M0 12.500h5"/></svg>
      <svg class="absolute left-[5px] top-[83px] w-[5px] h-[13px]" viewBox="0 0 5 13" fill="none" stroke="#cfcfcf"><path d="M0 .5h5M2.500 .5v12M0 12.500h5"/></svg>
      <!-- right edge markers -->
      <svg class="absolute right-[1px] top-[37px] w-[13px] h-[15px]" viewBox="0 0 13 15" fill="#c4c4c4"><path d="M0 0h13v9l-6.500 6L0 9z"/></svg>
      <svg class="absolute right-[1px] top-[55px] w-[14px] h-[12px]" viewBox="0 0 14 12" fill="#bdbdbd"><path d="M5 1h9v7H8L5 5 1 8z"/><circle cx="5" cy="8" r="2.500" fill="#232323" stroke="#d4d4d4" stroke-width="1.200"/></svg>
    </div>
  </div>

  <!-- timeline footer -->
  <div class="flex items-center h-[16px] shrink-0 bg-[#222222] border-t border-[#191919]">
    <svg class="w-[11px] h-[11px] ml-[3px]" viewBox="0 0 11 11" fill="none" stroke="#3f8ee8"><rect x=".5" y=".5" width="6" height="7"/><rect x="3.500" y="3.500" width="6" height="7"/></svg>
    <svg class="w-[11px] h-[11px] ml-[3px]" viewBox="0 0 11 11" fill="none" stroke="#3f8ee8"><circle cx="5" cy="4" r="3.500"/><path d="M5 7v3.500h4V6"/></svg>
    <svg class="w-[9px] h-[11px] ml-[3px]" viewBox="0 0 9 11" fill="#a8a8a8"><path d="M0 1h2v9H0zM7 1h2v9H7zM3 3.500h3v1H3zM3 6h3v1H3z"/></svg>
    <svg class="w-[8px] h-[6px] ml-[589px]" viewBox="0 0 8 6" fill="#c4c4c4"><path d="M4 0 8 6H0z"/></svg>
    <div class="relative flex items-center w-[38px] h-[2px] ml-[13px] bg-[#4a4a4a]"><div class="absolute left-[15px] w-[7px] h-[11px] rounded-full bg-[#232323] border border-[#a8a8a8]"></div></div>
    <svg class="w-[14px] h-[9px] ml-[12px]" viewBox="0 0 14 9" fill="#c4c4c4"><path d="M4 1 8 9H0zM9 0l5 9H8.500L6 4z"/></svg>
    <div class="w-[302px] h-[14px] ml-[6px] rounded-full bg-[#2e2e2e]"></div>
  </div>

  <!-- red annotation -->
  <svg class="absolute left-0 top-0 w-[400px] h-[120px] pointer-events-none" viewBox="0 0 400 120" fill="none" stroke="#e8251c" stroke-width="1.500">
    <rect x="57" y="73.500" width="24" height="16"/>
    <rect x="282" y="88.500" width="78" height="17"/>
    <path d="M81 89.500 282 105"/>
  </svg>
</section>

</body>
</html>
